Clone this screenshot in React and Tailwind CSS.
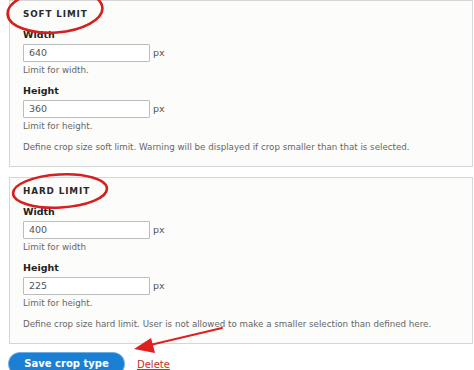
import React from "react";

const font = { fontFamily: '"DejaVu Sans", Verdana, sans-serif' };

function Field({ label, value, help, first }) {
  return (
    <div className={first ? "mt-[7px]" : "mt-[8px]"}>
      <div className="h-[14px] leading-[14px] text-[9.5px] font-bold text-[#222]">{label}</div>
      <div className="mt-[2px] flex items-center">
        <div className="w-[127px] h-[18px] border border-[#bdbdbd] bg-white rounded-[1px] pl-[5px] text-[9.5px] leading-[16px] text-[#555]">
          {value}
        </div>
        <span className="ml-[3px] text-[9.5px] text-[#555]">px</span>
      </div>
      <div className="mt-[2px] h-[12px] leading-[12px] text-[8.7px] text-[#666]">{help}</div>
    </div>
  );
}

function Limit({ title, fields, note }) {
  return (
    <div className="border border-[#d6d6d6] bg-[#fcfcfa] pl-[13px] pt-[6px] pb-[13px]">
      <div className="h-[14px] leading-[14px] text-[8.8px] font-bold tracking-[0.1em] text-[#2a2a2a]">{title}</div>
      {fields.map((f, i) => (
        <Field key={f.label} {...f} first={i === 0} />
      ))}
      <div className="mt-[9px] h-[12px] leading-[12px] text-[8.7px] text-[#666]">{note}</div>
    </div>
  );
}

export default function App() {
  return (
    <div className="relative w-[474px] h-[370px] overflow-hidden bg-white" style={font}>
      <div className="pl-[9px] pr-[1px] flex flex-col gap-[10px]">
        <Limit
          title="SOFT LIMIT"
          fields={[
            { label: "Width", value: "640", help: "Limit for width." },
            { label: "Height", value: "360", help: "Limit for height." },
          ]}
          note="Define crop size soft limit. Warning will be displayed if crop smaller than that is selected."
        />
        <Limit
          title="HARD LIMIT"
          fields={[
            { label: "Width", value: "400", help: "Limit for width" },
            { label: "Height", value: "225", help: "Limit for height." },
          ]}
          note="Define crop size hard limit. User is not allowed to make a smaller selection than defined here."
        />
        <div className="mt-[-1px] flex items-center gap-[13px]">
          <button className="w-[115px] h-[22px] rounded-[12px] bg-[#1b7fd3] text-white text-[10px] font-bold leading-[22px] shadow-[0_0_0_1px_#6aaee6]">
            Save crop type
          </button>
          <a href="#" className="text-[10px] text-[#c0321c] underline">Delete</a>
        </div>
      </div>

      {/* annotations */}
      <svg className="absolute inset-0 pointer-events-none" width="474" height="370" viewBox="0 0 474 370">
        <ellipse cx="55" cy="11" rx="47.5" ry="21.5" fill="none" stroke="#d61f1f" strokeWidth="2.6" transform="rotate(-4 55 11)" />
        <ellipse cx="60" cy="191" rx="47" ry="16.5" fill="none" stroke="#d61f1f" strokeWidth="2.6" transform="rotate(-3 60 191)" />
        <line x1="222" y1="328" x2="148" y2="345.5" stroke="#e02020" strokeWidth="2" strokeLinecap="round" />
        <polygon points="134,349 151,338 155,353" fill="#e02020" />
      </svg>
    </div>
  );
}
